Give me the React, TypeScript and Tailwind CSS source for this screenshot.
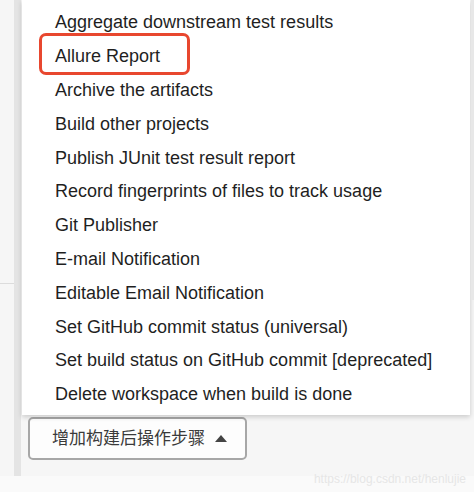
const items = [
  'Aggregate downstream test results',
  'Allure Report',
  'Archive the artifacts',
  'Build other projects',
  'Publish JUnit test result report',
  'Record fingerprints of files to track usage',
  'Git Publisher',
  'E-mail Notification',
  'Editable Email Notification',
  'Set GitHub commit status (universal)',
  'Set build status on GitHub commit [deprecated]',
  'Delete workspace when build is done',
];

export default function App() {
  return (
    <div
      className="relative h-[492px] w-[474px] overflow-hidden bg-[#fafafa]"
      style={{ fontFamily: '"Liberation Sans", "Noto Sans CJK SC", sans-serif' }}
    >
      {/* page behind the menu */}
      <div className="flex h-[476px] bg-[#f6f6f6]">
        <div className="flex w-[14px] flex-col">
          <div className="h-[283px]" />
          <div className="h-px bg-[#dcdcdc]" />
        </div>
        <div className="w-[7px] bg-[#e4e4e4]" />
        <div className="flex-1 pl-[7px] pt-[417px]">
          <button className="flex h-[43px] w-[219px] items-center gap-[10px] rounded-[5px] border-2 border-[#a7a7a7] bg-[#fdfdfd] pl-[22px] text-[17px] text-[#3a3a3a]">
            <span>增加构建后操作步骤</span>
            <svg width="12" height="7" viewBox="0 0 12 7" className="fill-[#444]">
              <path d="M6 0 L12 7 L0 7 Z" />
            </svg>
          </button>
        </div>
      </div>

      {/* watermark */}
      <div className="absolute bottom-[4px] right-[8px] text-[12px] text-[#e6e6e6]">
        https://blog.csdn.net/henlujie
      </div>

      {/* dropdown menu */}
      <div className="absolute left-[22px] top-0 w-[448px] bg-white pt-[6px] pb-[3px] shadow-[0_2px_5px_rgba(0,0,0,0.18)]">
        {items.map((item) => (
          <div key={item} className="flex h-[33.8px] items-center pl-[33px] text-[18px] text-[#1f1f1f]">
            {item}
          </div>
        ))}
      </div>

      {/* highlight around Allure Report */}
      <div className="absolute left-[39px] top-[33px] h-[42px] w-[151px] rounded-[7px] border-[3px] border-[#e8472f]" />

      {/* scrollbar edge */}
      <div className="absolute right-0 top-0 h-[300px] w-[3px] bg-[#e8e8e8]" />
    </div>
  );
}
